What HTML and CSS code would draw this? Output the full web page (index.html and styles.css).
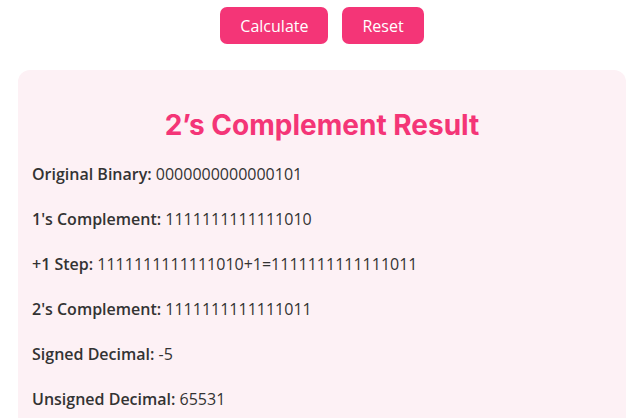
FILE: index.html
```html
<!DOCTYPE html>
<html lang="en">
<head>
  <meta charset="UTF-8">
  <title>2's Complement Calculator</title>
  <meta name="viewport" content="width=device-width, initial-scale=1.0">
  <link rel="stylesheet" href="styles.css">
</head>
<body>
  <div class="actions">
    <button type="button" class="btn">Calculate</button>
    <button type="button" class="btn">Reset</button>
  </div>

  <!-- result card -->
  <div class="result">
    <h2>2’s Complement Result</h2>
    <p><b>Original Binary:</b> 0000000000000101</p>
    <p><b>1's Complement:</b> 1111111111111010</p>
    <p><b>+1 Step:</b> 1111111111111010+1=1111111111111011</p>
    <p><b>2's Complement:</b> 1111111111111011</p>
    <p><b>Signed Decimal:</b> -5</p>
    <p><b>Unsigned Decimal:</b> 65531</p>
  </div>
</body>
</html>
```

FILE: styles.css
```css
body{margin:0;padding:7px 18px 0;background:#fff;font-family:"Open Sans","Noto Sans",sans-serif;color:#333}

.actions{display:flex;justify-content:center;gap:14px}
.btn{height:37px;padding:0 20px;border:none;border-radius:7px;background:#f43577;color:#fff;
     font-family:"Open Sans",sans-serif;font-size:16px;cursor:pointer}

.result{margin-top:26px;padding:38px 14px 20px;background:#fdf1f5;border-radius:12px;
        display:flex;flex-direction:column;gap:21px}
.result h2{margin:0 0 -1px;text-align:center;font-family:Inter,sans-serif;font-weight:700;
           font-size:28px;color:#f43577}
.result p{margin:0;font-size:16px;line-height:24px}
.result b{font-weight:600}
```
